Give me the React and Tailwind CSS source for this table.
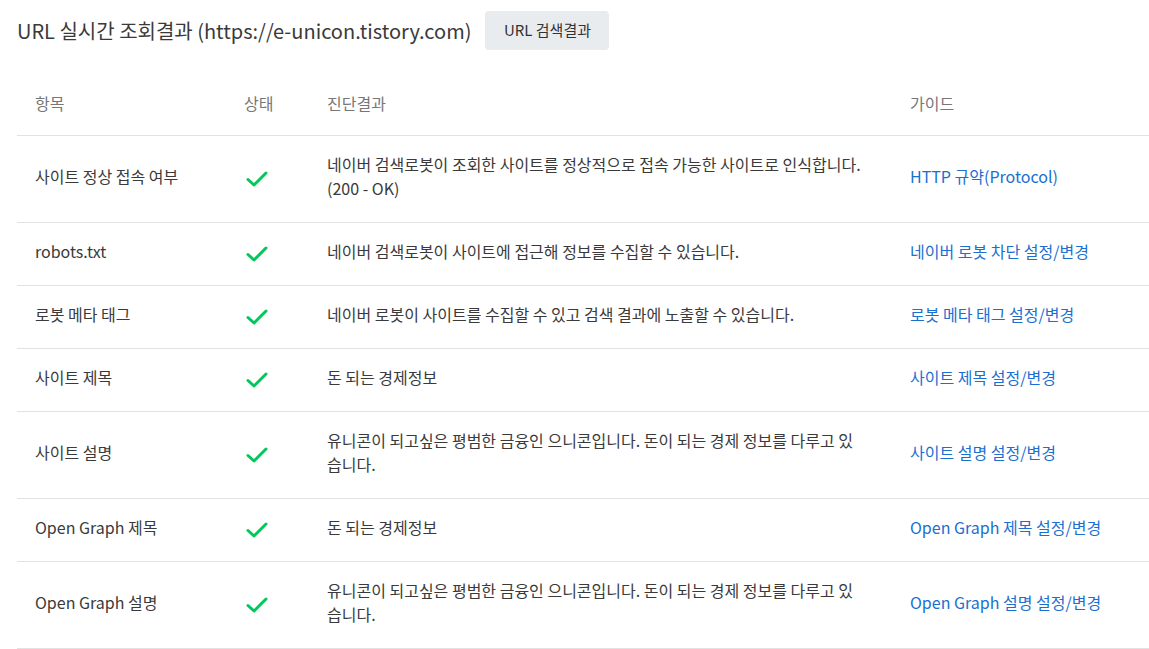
const rows = [
  {
    item: "사이트 정상 접속 여부",
    result: "네이버 검색로봇이 조회한 사이트를 정상적으로 접속 가능한 사이트로 인식합니다. (200 - OK)",
    guide: "HTTP 규약(Protocol)",
  },
  {
    item: "robots.txt",
    result: "네이버 검색로봇이 사이트에 접근해 정보를 수집할 수 있습니다.",
    guide: "네이버 로봇 차단 설정/변경",
  },
  {
    item: "로봇 메타 태그",
    result: "네이버 로봇이 사이트를 수집할 수 있고 검색 결과에 노출할 수 있습니다.",
    guide: "로봇 메타 태그 설정/변경",
  },
  { item: "사이트 제목", result: "돈 되는 경제정보", guide: "사이트 제목 설정/변경" },
  {
    item: "사이트 설명",
    result: "유니콘이 되고싶은 평범한 금융인 으니콘입니다. 돈이 되는 경제 정보를 다루고 있습니다.",
    guide: "사이트 설명 설정/변경",
  },
  { item: "Open Graph 제목", result: "돈 되는 경제정보", guide: "Open Graph 제목 설정/변경" },
  {
    item: "Open Graph 설명",
    result: "유니콘이 되고싶은 평범한 금융인 으니콘입니다. 돈이 되는 경제 정보를 다루고 있습니다.",
    guide: "Open Graph 설명 설정/변경",
  },
];

function Check() {
  return (
    <svg width="22" height="16" viewBox="0 0 22 16" fill="none">
      <path d="M2 8.5 L8 14 L20 2" stroke="#03c75a" strokeWidth="3" strokeLinecap="round" strokeLinejoin="round" />
    </svg>
  );
}

export default function App() {
  return (
    <div
      className="min-h-screen bg-white pl-[17px] text-[#3a3a3a]"
      style={{ fontFamily: '"Noto Sans CJK KR", "Noto Sans", sans-serif' }}
    >
      <div className="flex items-center gap-[14px] pt-[11px]">
        <h2 className="text-[20px] text-[#3a3a3a]">
          URL 실시간 조회결과 (https://e-unicon.tistory.com)
        </h2>
        <button className="h-[39px] w-[124px] rounded-[4px] bg-[#e9ecef] text-[15px] text-[#333]">
          URL 검색결과
        </button>
      </div>

      <table className="mt-[19px] w-full table-fixed border-collapse text-[16px]">
        <colgroup>
          <col className="w-[209px]" />
          <col className="w-[83px]" />
          <col className="w-[583px]" />
          <col />
        </colgroup>
        <thead>
          <tr className="border-b border-[#e2e2e2] text-left text-[#777]">
            <th className="h-[66px] pl-[18px] pt-[2px] font-normal">항목</th>
            <th className="pl-[18px] pt-[2px] font-normal">상태</th>
            <th className="pl-[18px] pt-[2px] font-normal">진단결과</th>
            <th className="pl-[18px] pt-[2px] font-normal">가이드</th>
          </tr>
        </thead>
        <tbody>
          {rows.map((row) => (
            <tr key={row.item} className="border-b border-[#e2e2e2]">
              <td className="pb-[22px] pl-[18px] pt-[16px] leading-6">{row.item}</td>
              <td className="pl-[20px] pt-[1px]">
                <Check />
              </td>
              <td className="pb-[22px] pl-[18px] pr-[28px] pt-[16px] leading-6">{row.result}</td>
              <td className="pb-[22px] pl-[18px] pt-[16px] leading-6 text-[#1a6fd1]">
                <a href="#">{row.guide}</a>
              </td>
            </tr>
          ))}
        </tbody>
      </table>
    </div>
  );
}
